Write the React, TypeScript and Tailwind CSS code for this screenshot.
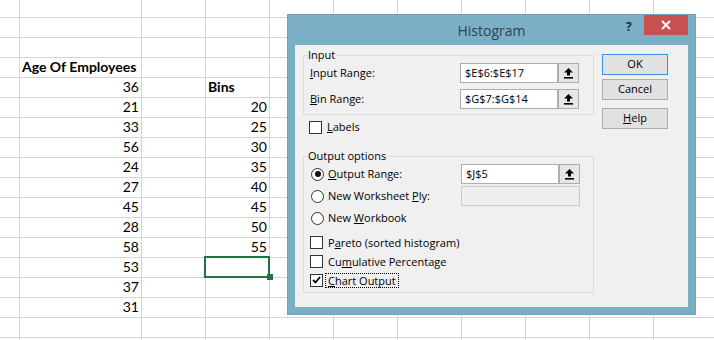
import React from "react";

const ageCol: Record<number, string> = {
  4: "36", 5: "21", 6: "33", 7: "56", 8: "24", 9: "27",
  10: "45", 11: "28", 12: "58", 13: "53", 14: "37", 15: "31",
};
const binCol: Record<number, string> = {
  5: "20", 6: "25", 7: "30", 8: "35", 9: "40", 10: "45", 11: "50", 12: "55",
};

const UpArrow = () => (
  <svg width="9" height="11" viewBox="0 0 9 11">
    <polygon points="4.5,0 9,4.5 6,4.5 6,7.5 3,7.5 3,4.5 0,4.5" fill="#000" />
    <rect x="0" y="9" width="9" height="1.6" fill="#000" />
  </svg>
);

const RangeBox = ({ value }: { value: string }) => (
  <div className="flex h-[20px]">
    <div className="w-[98px] h-full border border-[#abadb3] bg-white pl-[4px] leading-[18px]">{value}</div>
    <div className="w-[21px] h-full border border-[#adadad] bg-[#e6e6e6] flex items-center justify-center">
      <UpArrow />
    </div>
  </div>
);

const CheckBox = ({ checked }: { checked?: boolean }) => (
  <div className="w-[13px] h-[13px] border border-[#333] bg-white flex items-center justify-center shrink-0">
    {checked && (
      <svg width="9" height="8" viewBox="0 0 9 8">
        <path d="M1 4 L3.5 6.5 L8 1" stroke="#000" strokeWidth="1.8" fill="none" />
      </svg>
    )}
  </div>
);

const Radio = ({ checked }: { checked?: boolean }) => (
  <div className="w-[13px] h-[13px] rounded-full border border-[#333] bg-white flex items-center justify-center shrink-0">
    {checked && <div className="w-[6px] h-[6px] rounded-full bg-[#111]" />}
  </div>
);

const Btn = ({ children, primary }: { children: React.ReactNode; primary?: boolean }) => (
  <div
    className={
      "w-[66px] h-[21px] bg-[#e1e1e1] border flex items-center justify-center " +
      (primary ? "border-[#3c8ee0]" : "border-[#adadad]")
    }
  >
    {children}
  </div>
);

function Sheet() {
  const rows = Array.from({ length: 18 }, (_, i) => i);
  const cols = Array.from({ length: 11 }, (_, i) => i);
  return (
    <div
      className="grid grid-cols-[20px_122px_repeat(9,64px)] grid-rows-[18px_repeat(17,20px)] text-[14px] text-black"
      style={{ fontFamily: "Lato, 'Open Sans', sans-serif" }}
    >
      {rows.map((r) =>
        cols.map((c) => {
          let content: React.ReactNode = null;
          let align = "justify-end pr-[2px]";
          if (c === 1 && r === 3) {
            content = <span className="font-bold whitespace-nowrap">Age Of Employees</span>;
            align = "justify-start pl-[2px]";
          } else if (c === 1 && ageCol[r]) {
            content = ageCol[r];
          } else if (c === 3 && r === 4) {
            content = <span className="font-bold">Bins</span>;
            align = "justify-start pl-[2px]";
          } else if (c === 3 && binCol[r]) {
            content = binCol[r];
          }
          const selected = c === 3 && r === 13;
          return (
            <div
              key={r + "-" + c}
              className={
                "relative border-r border-b border-[#d4d4d4] flex items-end pb-[1px] leading-[18px] " +
                align +
                (selected ? " z-10" : "")
              }
            >
              {content}
              {selected && (
                <>
                  <div className="absolute -left-[2px] -top-[2px] -right-[1px] -bottom-[1px] border-2 border-[#217346]" />
                  <div className="absolute left-[61px] top-[16px] w-[6px] h-[6px] bg-[#217346]" />
                </>
              )}
            </div>
          );
        })
      )}
    </div>
  );
}

function HistogramDialog() {
  return (
    <div
      className="absolute z-20 left-[287px] top-[14px] w-[409px] h-[301px] bg-[#7aafc6] border border-[#6ea3bb] flex flex-col text-[11px] text-black"
      style={{ fontFamily: "'Open Sans', 'Noto Sans', sans-serif" }}
    >
      <div className="relative h-[30px] flex items-center justify-center">
        <span className="text-[14px] text-[#2f4250] mt-[1px]">Histogram</span>
        <span className="absolute left-[338px] top-[3px] text-[12px] font-bold text-[#1d2d38]">?</span>
        <div className="absolute right-[7px] top-0 w-[44px] h-[20px] bg-[#c75050] flex items-center justify-center">
          <svg width="10" height="10" viewBox="0 0 10 10">
            <path d="M1 1 L9 9 M9 1 L1 9" stroke="#fff" strokeWidth="1.8" />
          </svg>
        </div>
      </div>

      <div className="mx-[7px] h-[262px] bg-[#f0f0f0] flex">
        <div className="ml-[8px] w-[291px] pt-[2px]">
          <fieldset className="border border-[#dcdcdc] pl-[6px] pb-[5px]">
            <legend className="-ml-[3px] px-[1px] leading-[16px]">Input</legend>
            <div className="flex items-center h-[20px]">
              <span className="w-[150px]"><u>I</u>nput Range:</span>
              <RangeBox value="$E$6:$E$17" />
            </div>
            <div className="flex items-center h-[20px] mt-[6px]">
              <span className="w-[150px]"><u>B</u>in Range:</span>
              <RangeBox value="$G$7:$G$14" />
            </div>
          </fieldset>

          <div className="flex items-center h-[16px] mt-[4px] ml-[6px]">
            <CheckBox />
            <span className="ml-[2px] px-[2px] border border-transparent leading-[14px]"><u>L</u>abels</span>
          </div>

          <fieldset className="border border-[#dcdcdc] pl-[7px] pb-[3px] mt-[13px]">
            <legend className="-ml-[4px] px-[1px] leading-[16px]">Output options</legend>
            <div className="flex items-center h-[20px]">
              <div className="w-[150px] flex items-center">
                <Radio checked />
                <span className="ml-[4px]"><u>O</u>utput Range:</span>
              </div>
              <RangeBox value="$J$5" />
            </div>
            <div className="flex items-center h-[20px] mt-[2px]">
              <div className="w-[150px] flex items-center">
                <Radio />
                <span className="ml-[4px]">New Worksheet <u>P</u>ly:</span>
              </div>
              <div className="w-[119px] h-[20px] border border-[#c8c8c8] bg-[#eeeeee]" />
            </div>
            <div className="flex items-center h-[20px] mt-[2px]">
              <Radio />
              <span className="ml-[4px]">New <u>W</u>orkbook</span>
            </div>

            <div className="flex items-center h-[19px] mt-[5px] -ml-[1px]">
              <CheckBox />
              <span className="ml-[2px] px-[2px] border border-transparent leading-[13px]">P<u>a</u>reto (sorted histogram)</span>
            </div>
            <div className="flex items-center h-[19px] -ml-[1px]">
              <CheckBox />
              <span className="ml-[2px] px-[2px] border border-transparent leading-[13px]">Cu<u>m</u>ulative Percentage</span>
            </div>
            <div className="flex items-center h-[18px] -ml-[1px]">
              <CheckBox checked />
              <span className="ml-[2px] px-[2px] border border-dotted border-black leading-[13px]"><u>C</u>hart Output</span>
            </div>
          </fieldset>
        </div>

        <div className="ml-[8px] mt-[9px] flex flex-col">
          <Btn primary>OK</Btn>
          <div className="mt-[4px]">
            <Btn>Cancel</Btn>
          </div>
          <div className="mt-[8px]">
            <Btn><span><u>H</u>elp</span></Btn>
          </div>
        </div>
      </div>
    </div>
  );
}

export default function App() {
  return (
    <div className="relative w-[714px] h-[340px] overflow-hidden bg-white">
      <Sheet />
      <HistogramDialog />
    </div>
  );
}
